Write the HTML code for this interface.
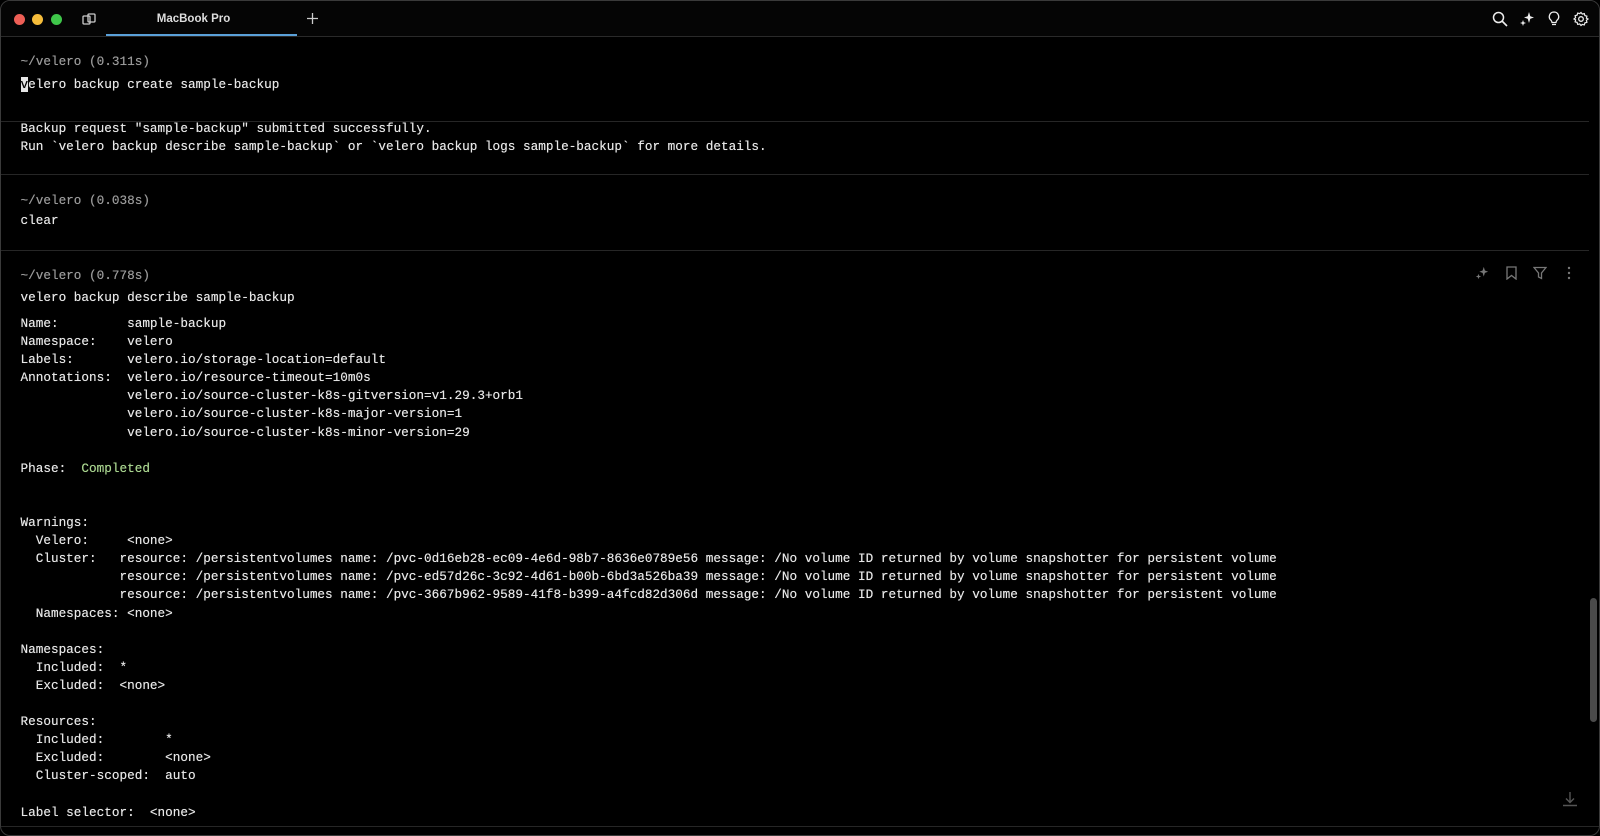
<!DOCTYPE html>
<html><head><meta charset="utf-8"><style>
html,body{margin:0;padding:0;background:#000;width:1600px;height:836px;overflow:hidden}
body{position:relative;font-family:"Liberation Mono",monospace;font-size:12.7px;color:#e6e6e6}
.win{position:absolute;left:0;top:0;width:1598px;height:834px;border:1px solid #3a3a3a;border-radius:10px;overflow:hidden}
.tb{position:absolute;left:0;top:0;width:100%;height:35px;border-bottom:1px solid #2a2a2a;background:#050505}
.dot{position:absolute;top:13px;width:11px;height:11px;border-radius:50%}
.tab{position:absolute;left:105px;top:0;width:191px;height:33px;border-bottom:2px solid #5aa0d8;color:#ddd;font-family:"Liberation Sans",sans-serif;font-size:11.5px;font-weight:bold;text-align:center;line-height:36px}
.tab span{position:relative;left:-8px}
.sep{position:absolute;left:0;width:1588px;height:1px;background:#262626}
pre{position:absolute;left:19.5px;margin:0;font:inherit;line-height:18.1px;white-space:pre;text-shadow:0 0 0.4px currentColor}
.p{color:#9a9a9a}
.g{color:#a9d58f}
.cur{background:#e6e6e6;color:#000}
svg{position:absolute}
</style></head><body><div class="win">
<div class="tb">
<div class="dot" style="left:13px;background:#ee5f56"></div>
<div class="dot" style="left:31px;background:#f6bd3b"></div>
<div class="dot" style="left:50px;background:#3fc74a"></div>
<svg style="left:81px;top:12px" width="14" height="12" viewBox="0 0 14 12"><rect x="1" y="3" width="7" height="8" rx="1" fill="none" stroke="#ccc" stroke-width="1.3"/><rect x="6" y="1" width="7" height="8" rx="1" fill="none" stroke="#ccc" stroke-width="1.3"/></svg>
<div class="tab"><span>MacBook Pro</span></div>
<svg style="left:306px;top:12px" width="11" height="11"><path d="M5.5 0V11M0 5.5H11" stroke="#ccc" stroke-width="1.3"/></svg>
<svg style="left:1491px;top:10px" width="16" height="16"><circle cx="6.5" cy="6.5" r="5" fill="none" stroke="#eee" stroke-width="1.5"/><path d="M10 10L15 15" stroke="#eee" stroke-width="1.6"/></svg>
<svg style="left:1518px;top:10px" width="16" height="16" viewBox="0 0 16 16"><path d="M10 1L11.3 5.2 15 6.5 11.3 7.8 10 12 8.7 7.8 5 6.5 8.7 5.2Z" fill="#eee"/><path d="M4 9L4.8 11.2 7 12 4.8 12.8 4 15 3.2 12.8 1 12 3.2 11.2Z" fill="#eee"/></svg>
<svg style="left:1547px;top:10px" width="12" height="16" viewBox="0 0 12 16"><path d="M6 1a4.7 4.7 0 0 0-3 8.3c.6.6 1 1.3 1 2.2h4c0-.9.4-1.6 1-2.2A4.7 4.7 0 0 0 6 1z" fill="none" stroke="#eee" stroke-width="1.3"/><path d="M4 13.5h4" stroke="#eee" stroke-width="1.3"/></svg>
<svg style="left:1572px;top:10px" width="16" height="16" viewBox="0 0 16 16"><circle cx="8" cy="8" r="2.3" fill="none" stroke="#eee" stroke-width="1.3"/><path d="M8 1.5l1.3 1.6 2-.5.6 2 2 .6-.5 2L15 8l-1.6 1.3.5 2-2 .6-.6 2-2-.5L8 14.5l-1.3-1.6-2 .5-.6-2-2-.6.5-2L1 8l1.6-1.3-.5-2 2-.6.6-2 2 .5z" fill="none" stroke="#eee" stroke-width="1.2"/></svg>
</div>

<pre class="p" style="top:52px">~/velero (0.311s)</pre>
<pre style="top:75px"><span class="cur">v</span>elero backup create sample-backup</pre>
<div class="sep" style="top:120px"></div>
<pre style="top:119px">Backup request "sample-backup" submitted successfully.
Run `velero backup describe sample-backup` or `velero backup logs sample-backup` for more details.</pre>
<div class="sep" style="top:173px"></div>
<pre class="p" style="top:191px">~/velero (0.038s)</pre>
<pre style="top:211px">clear</pre>
<div class="sep" style="top:249px"></div>
<pre class="p" style="top:266px">~/velero (0.778s)</pre>
<pre style="top:288px">velero backup describe sample-backup</pre>
<svg style="left:1474px;top:265px" width="14" height="14" viewBox="0 0 16 16"><path d="M10 1L11.3 5.2 15 6.5 11.3 7.8 10 12 8.7 7.8 5 6.5 8.7 5.2Z" fill="#777"/><path d="M4 9L4.8 11.2 7 12 4.8 12.8 4 15 3.2 12.8 1 12 3.2 11.2Z" fill="#777"/></svg>
<svg style="left:1505px;top:265px" width="11" height="14"><path d="M1 1H10V13L5.5 9.5 1 13Z" fill="none" stroke="#777" stroke-width="1.3"/></svg>
<svg style="left:1532px;top:265px" width="14" height="14"><path d="M1 1.5H13L8.5 7V12.5L5.5 11V7Z" fill="none" stroke="#777" stroke-width="1.3"/></svg>
<svg style="left:1566px;top:265px" width="4" height="14"><circle cx="2" cy="2" r="1.2" fill="#777"/><circle cx="2" cy="7" r="1.2" fill="#777"/><circle cx="2" cy="12" r="1.2" fill="#777"/></svg>
<pre style="top:314px">Name:         sample-backup
Namespace:    velero
Labels:       velero.io/storage-location=default
Annotations:  velero.io/resource-timeout=10m0s
              velero.io/source-cluster-k8s-gitversion=v1.29.3+orb1
              velero.io/source-cluster-k8s-major-version=1
              velero.io/source-cluster-k8s-minor-version=29

Phase:  <span class="g">Completed</span>


Warnings:
  Velero:     &lt;none&gt;
  Cluster:   resource: /persistentvolumes name: /pvc-0d16eb28-ec09-4e6d-98b7-8636e0789e56 message: /No volume ID returned by volume snapshotter for persistent volume
             resource: /persistentvolumes name: /pvc-ed57d26c-3c92-4d61-b00b-6bd3a526ba39 message: /No volume ID returned by volume snapshotter for persistent volume
             resource: /persistentvolumes name: /pvc-3667b962-9589-41f8-b399-a4fcd82d306d message: /No volume ID returned by volume snapshotter for persistent volume
  Namespaces: &lt;none&gt;

Namespaces:
  Included:  *
  Excluded:  &lt;none&gt;

Resources:
  Included:        *
  Excluded:        &lt;none&gt;
  Cluster-scoped:  auto

Label selector:  &lt;none&gt;</pre>
<div style="position:absolute;left:1589px;top:597px;width:7px;height:124px;border-radius:4px;background:#4a4a4a"></div>
<svg style="left:1560px;top:790px" width="18" height="16"><path d="M9 1V11M5 7.5L9 11.5 13 7.5" fill="none" stroke="#555" stroke-width="1.4"/><path d="M2 14.5H16" stroke="#555" stroke-width="1.4"/></svg>
<div class="sep" style="top:825px;width:1600px"></div>
</div></body></html>
